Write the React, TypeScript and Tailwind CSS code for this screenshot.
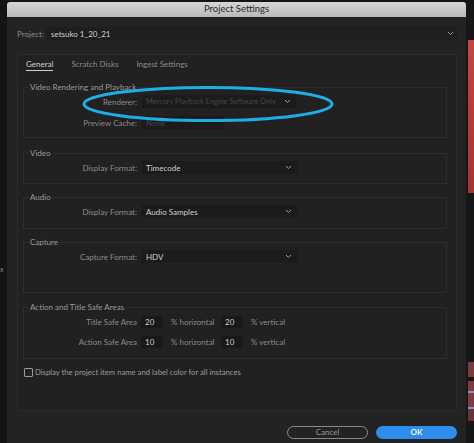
import type { ReactNode } from "react"

function Chevron() {
  return (
    <svg width="7" height="5" viewBox="0 0 7 5" className="shrink-0">
      <polyline points="1,1 3.5,3.5 6,1" fill="none" stroke="#9a9a9a" strokeWidth="1" />
    </svg>
  )
}

function Select({
  value,
  width,
  disabled,
  textClass = "",
}: {
  value: string
  width: string
  disabled?: boolean
  textClass?: string
}) {
  return (
    <div
      className={`${width} h-[13px] bg-[#1b1b1b] flex items-center justify-between pl-[4px] pr-[5px] whitespace-nowrap ${
        disabled ? "text-[#454545]" : "text-[#cfcfcf]"
      }`}
    >
      <span className={textClass}>{value}</span>
      {!disabled || value !== "None" ? <Chevron /> : null}
    </div>
  )
}

function Row({ label, children }: { label: string; children: ReactNode }) {
  return (
    <div className="flex items-center h-[13px]">
      <div className="w-[118px] text-right text-[#8a8a8a] pr-[5px] whitespace-nowrap">{label}</div>
      {children}
    </div>
  )
}

function Section({ title, className, children }: { title: string; className: string; children: ReactNode }) {
  return (
    <fieldset className={`border border-[#2d2d2d] px-0 ${className}`}>
      <legend className="ml-[5px] px-[1px] leading-[10px] text-[#9a9a9a]">{title}</legend>
      {children}
    </fieldset>
  )
}

function NumBox({ value }: { value: string }) {
  return <div className="w-[22px] h-[12px] bg-[#191919] text-[#cfcfcf] pl-[4px] leading-[12px]">{value}</div>
}

export default function App() {
  return (
    <div
      className="relative w-[474px] h-[443px] bg-[#151515] flex text-[8px] overflow-hidden"
      style={{ fontFamily: "Lato, 'Open Sans', sans-serif" }}
    >
      {/* left strip */}
      <div className="w-[7px] bg-[#141414] flex flex-col">
        <div className="h-[265px]" />
        <div className="text-[#888] text-[7px] leading-[8px]">x</div>
      </div>

      {/* dialog */}
      <div className="w-[459px] pt-[2px] flex flex-col">
        <div className="h-[15px] rounded-t-[3px] bg-gradient-to-b from-[#d6d6d6] to-[#b9b9b9] flex items-center justify-center text-[#2a2a2a] text-[9.5px]">
          Project Settings
        </div>

        <div className="flex-1 bg-[#232323] pl-[10px] pr-[9px]">
          {/* project row */}
          <div className="flex items-center mt-[10px] h-[13px]">
            <span className="w-[29px] text-[#8a8a8a]">Project:</span>
            <div className="flex-1 h-[13px] bg-[#1e1e1e] flex items-center justify-between pl-[5px] pr-[3px] text-[#cfcfcf]">
              <span>setsuko 1_20_21</span>
              <Chevron />
            </div>
          </div>

          {/* main panel */}
          <div className="mt-[14px] border border-[#2b2b2b] bg-[#212121] pl-[5px] pr-[9px] pb-[31px]">
            <div className="flex h-[18px] items-center pl-[3px] gap-[18px]">
              <div className="text-[#cfcfcf] border-b border-[#cfcfcf] leading-[11px] mt-[1px]">General</div>
              <div className="text-[#8a8a8a] -mt-[1px]">Scratch Disks</div>
              <div className="text-[#8a8a8a] -mt-[1px]">Ingest Settings</div>
            </div>

            <Section title="Video Rendering and Playback" className="mt-[9px] pt-[3px] pb-[8px]">
              <div className="flex flex-col gap-[8px]">
                <Row label="Renderer:">
                  <Select
                    value="Mercury Playback Engine Software Only"
                    width="w-[154px]"
                    textClass="text-[7.4px]"
                    disabled
                  />
                </Row>
                <Row label="Preview Cache:">
                  <Select value="None" width="w-[82px]" disabled />
                </Row>
              </div>
            </Section>

            <Section title="Video" className="mt-[10px] pt-[3px] pb-[9px]">
              <Row label="Display Format:">
                <Select value="Timecode" width="w-[155px]" />
              </Row>
            </Section>

            <Section title="Audio" className="mt-[8px] pt-[3px] pb-[10px]">
              <Row label="Display Format:">
                <Select value="Audio Samples" width="w-[155px]" />
              </Row>
            </Section>

            <Section title="Capture" className="mt-[8px] pt-[3px] pb-[29px]">
              <Row label="Capture Format:">
                <Select value="HDV" width="w-[155px]" />
              </Row>
            </Section>

            <Section title="Action and Title Safe Areas" className="mt-[9px] pt-[3px] pb-[10px]">
              <div className="flex flex-col gap-[7px]">
                {[
                  ["Title Safe Area", "20", "20"],
                  ["Action Safe Area", "10", "10"],
                ].map(([label, h, v]) => (
                  <div key={label} className="flex items-center h-[13px]">
                    <div className="w-[117px] text-right text-[#8a8a8a] pr-[4px]">{label}</div>
                    <NumBox value={h} />
                    <span className="ml-[8px] w-[50px] text-[#8a8a8a]">% horizontal</span>
                    <NumBox value={v} />
                    <span className="ml-[8px] text-[#8a8a8a]">% vertical</span>
                  </div>
                ))}
              </div>
            </Section>

            <div className="flex items-center mt-[8px] pl-[1px] gap-[2px]">
              <div className="w-[9px] h-[9px] border border-[#9a9a9a] rounded-[1px]" />
              <span className="text-[#9a9a9a] text-[7.7px]">Display the project item name and label color for all instances</span>
            </div>
          </div>

          {/* buttons */}
          <div className="flex justify-end gap-[8px] mt-[15px]">
            <div className="w-[81px] h-[13px] rounded-full border border-[#8a8a8a] flex items-center justify-center text-[#9a9a9a]">
              Cancel
            </div>
            <div className="w-[81px] h-[13px] rounded-full bg-[#2f8ded] flex items-center justify-center text-[#e8f2ff] font-bold">
              OK
            </div>
          </div>
        </div>
      </div>

      {/* right strip */}
      <div className="w-[8px] bg-[#161616] flex flex-col pl-[2px]">
        <div className="h-[40px]" />
        <div className="h-[153px] bg-gradient-to-b from-[#c84444] to-[#a23535]" />
        <div className="h-[169px]" />
        <div className="h-[15px] bg-[#7a3c3c]" />
        <div className="h-[4px]" />
        <div className="h-[10px] bg-[#7a3c3c]" />
        <div className="h-[2px] bg-[#8a8ad0]" />
        <div className="h-[14px] bg-[#7a3c3c]" />
        <div className="h-[2px] bg-[#8a8ad0]" />
        <div className="h-[12px] bg-[#6a3434]" />
      </div>

      {/* annotation ellipse */}
      <svg className="absolute left-0 top-0 pointer-events-none" width="474" height="443">
        <ellipse cx="208" cy="104" rx="124" ry="16.5" fill="none" stroke="#1eaee6" strokeWidth="3" />
      </svg>
    </div>
  )
}
